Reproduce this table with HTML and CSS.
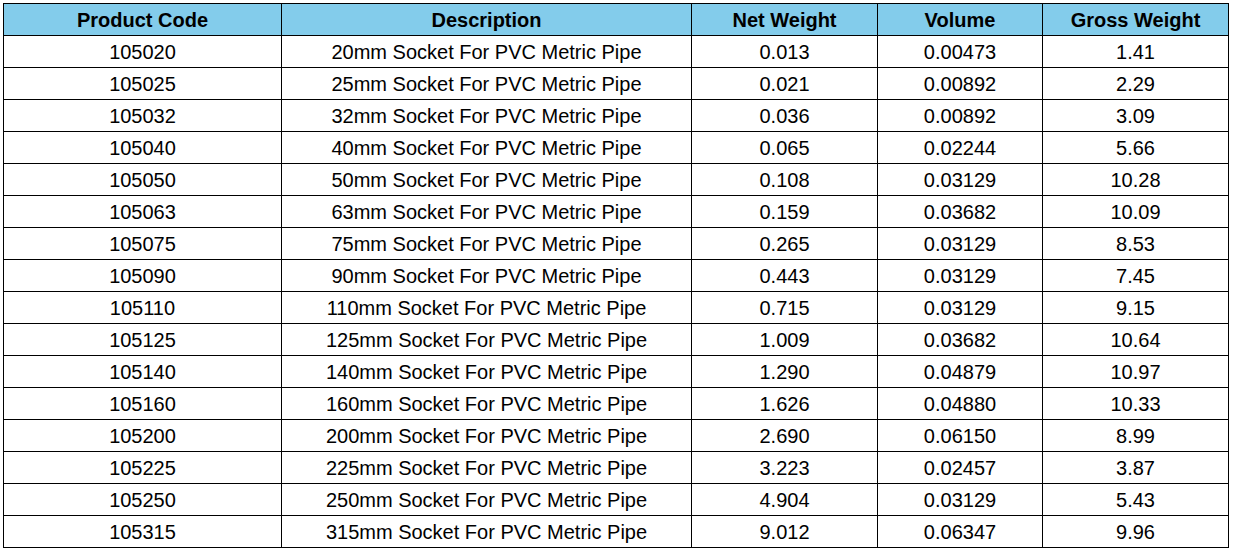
FILE: index.html
```html
<!DOCTYPE html>
<html>
<head>
<meta charset="utf-8">
<link rel="stylesheet" href="styles.css">
</head>
<body>
<table class="grid">
<colgroup>
<col class="c1"><col class="c2"><col class="c3"><col class="c4"><col class="c5">
</colgroup>
<thead>
<tr><th>Product Code</th><th>Description</th><th>Net Weight</th><th>Volume</th><th>Gross Weight</th></tr>
</thead>
<tbody>
<tr><td>105020</td><td>20mm Socket For PVC Metric Pipe</td><td>0.013</td><td>0.00473</td><td>1.41</td></tr>
<tr><td>105025</td><td>25mm Socket For PVC Metric Pipe</td><td>0.021</td><td>0.00892</td><td>2.29</td></tr>
<tr><td>105032</td><td>32mm Socket For PVC Metric Pipe</td><td>0.036</td><td>0.00892</td><td>3.09</td></tr>
<tr><td>105040</td><td>40mm Socket For PVC Metric Pipe</td><td>0.065</td><td>0.02244</td><td>5.66</td></tr>
<tr><td>105050</td><td>50mm Socket For PVC Metric Pipe</td><td>0.108</td><td>0.03129</td><td>10.28</td></tr>
<tr><td>105063</td><td>63mm Socket For PVC Metric Pipe</td><td>0.159</td><td>0.03682</td><td>10.09</td></tr>
<tr><td>105075</td><td>75mm Socket For PVC Metric Pipe</td><td>0.265</td><td>0.03129</td><td>8.53</td></tr>
<tr><td>105090</td><td>90mm Socket For PVC Metric Pipe</td><td>0.443</td><td>0.03129</td><td>7.45</td></tr>
<tr><td>105110</td><td>110mm Socket For PVC Metric Pipe</td><td>0.715</td><td>0.03129</td><td>9.15</td></tr>
<tr><td>105125</td><td>125mm Socket For PVC Metric Pipe</td><td>1.009</td><td>0.03682</td><td>10.64</td></tr>
<tr><td>105140</td><td>140mm Socket For PVC Metric Pipe</td><td>1.290</td><td>0.04879</td><td>10.97</td></tr>
<tr><td>105160</td><td>160mm Socket For PVC Metric Pipe</td><td>1.626</td><td>0.04880</td><td>10.33</td></tr>
<tr><td>105200</td><td>200mm Socket For PVC Metric Pipe</td><td>2.690</td><td>0.06150</td><td>8.99</td></tr>
<tr><td>105225</td><td>225mm Socket For PVC Metric Pipe</td><td>3.223</td><td>0.02457</td><td>3.87</td></tr>
<tr><td>105250</td><td>250mm Socket For PVC Metric Pipe</td><td>4.904</td><td>0.03129</td><td>5.43</td></tr>
<tr><td>105315</td><td>315mm Socket For PVC Metric Pipe</td><td>9.012</td><td>0.06347</td><td>9.96</td></tr>
</tbody>
</table>
</body>
</html>
```

FILE: styles.css
```css
html, body {
  margin: 0;
  padding: 0;
  background: #ffffff;
}
body {
  padding: 3px 0 0 3px;
  font-family: "Liberation Sans", Arial, sans-serif;
  color: #000;
}
.grid {
  border-collapse: collapse;
  table-layout: fixed;
  width: 1226px;
}
.c1 { width: 278px; }
.c2 { width: 410px; }
.c3 { width: 186px; }
.c4 { width: 165px; }
.c5 { width: 186px; }
.grid th, .grid td {
  border: 1px solid #000;
  height: 29px;
  padding: 2px 0 0 0;
  text-align: center;
  vertical-align: middle;
  font-size: 20px;
  line-height: 29px;
  white-space: nowrap;
}
.grid th {
  background: #83cceb;
  font-weight: bold;
  padding-top: 1px;
  height: 30px;
  line-height: 30px;
}
```
